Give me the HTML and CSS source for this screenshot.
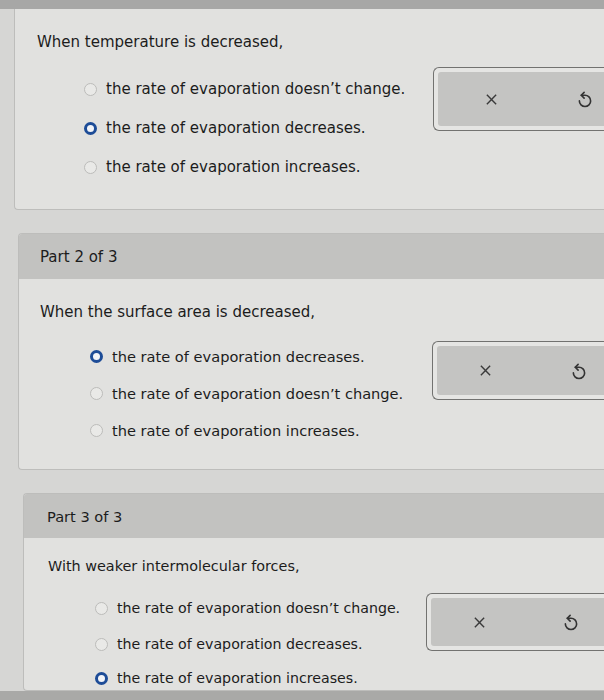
FILE: index.html
```html
<!DOCTYPE html>
<html>
<head>
<meta charset="utf-8">
<link rel="stylesheet" href="styles.css">
</head>
<body>
<div class="topband"></div>

<section class="card card1">
  <div class="body">
    <p class="question">When temperature is decreased,</p>
    <div class="row">
      <ul class="options">
        <li><span class="radio"></span>the rate of evaporation doesn’t change.</li>
        <li><span class="radio on"></span>the rate of evaporation decreases.</li>
        <li><span class="radio"></span>the rate of evaporation increases.</li>
      </ul>
      <div class="answer">
        <div class="answer-inner">
          <svg class="ico-x" viewBox="0 0 14 14"><path d="M2 2L12 12M12 2L2 12"/></svg>
          <svg class="ico-undo" viewBox="0 0 16 16"><path d="M5 5H8A4.5 4.5 0 1 1 3.5 9.5"/><path d="M7.3 2.7L5 5L7.3 7.3"/></svg>
        </div>
      </div>
    </div>
  </div>
</section>

<section class="card card2">
  <div class="head">Part 2 of 3</div>
  <div class="body">
    <p class="question">When the surface area is decreased,</p>
    <div class="row">
      <ul class="options">
        <li><span class="radio on"></span>the rate of evaporation decreases.</li>
        <li><span class="radio"></span>the rate of evaporation doesn’t change.</li>
        <li><span class="radio"></span>the rate of evaporation increases.</li>
      </ul>
      <div class="answer">
        <div class="answer-inner">
          <svg class="ico-x" viewBox="0 0 14 14"><path d="M2 2L12 12M12 2L2 12"/></svg>
          <svg class="ico-undo" viewBox="0 0 16 16"><path d="M5 5H8A4.5 4.5 0 1 1 3.5 9.5"/><path d="M7.3 2.7L5 5L7.3 7.3"/></svg>
        </div>
      </div>
    </div>
  </div>
</section>

<section class="card card3">
  <div class="head">Part 3 of 3</div>
  <div class="body">
    <p class="question">With weaker intermolecular forces,</p>
    <div class="row">
      <ul class="options">
        <li><span class="radio"></span>the rate of evaporation doesn’t change.</li>
        <li><span class="radio"></span>the rate of evaporation decreases.</li>
        <li><span class="radio on"></span>the rate of evaporation increases.</li>
      </ul>
      <div class="answer">
        <div class="answer-inner">
          <svg class="ico-x" viewBox="0 0 14 14"><path d="M2 2L12 12M12 2L2 12"/></svg>
          <svg class="ico-undo" viewBox="0 0 16 16"><path d="M5 5H8A4.5 4.5 0 1 1 3.5 9.5"/><path d="M7.3 2.7L5 5L7.3 7.3"/></svg>
        </div>
      </div>
    </div>
  </div>
</section>
<div class="bottomband"></div>
</body>
</html>
```

FILE: styles.css
```css
html, body {
  margin: 0;
  padding: 0;
}
body {
  width: 604px;
  height: 700px;
  overflow: hidden;
  background: #d6d6d4;
  font-family: "DejaVu Sans", Verdana, sans-serif;
  color: #1c1c1c;
}
.topband {
  height: 9px;
  background: #a7a7a6;
}
.card {
  background: #e1e1df;
  border: 1px solid #bdbdbb;
  border-right: none;
  border-radius: 4px 0 0 4px;
  margin-right: -20px;
  overflow: hidden;
}
.card1 {
  margin-left: 14px;
  border-top: none;
  border-radius: 0 0 0 4px;
  height: 200px;
}
.card2 {
  margin-left: 18px;
  margin-top: 23px;
  height: 235px;
}
.card3 {
  margin-left: 23px;
  margin-top: 23px;
  height: 196px;
}
.head {
  background: #c2c2c0;
  height: 45px;
  display: flex;
  align-items: center;
  padding-left: 21px;
  font-size: 15px;
}
.card3 .head { padding-left: 23px; height: 44px; font-size: 14.6px; }
.question {
  margin: 0;
  font-size: 15px;
  line-height: 18px;
}
.card1 .question { padding: 24px 0 0 22px; }
.card2 .question { padding: 24px 0 0 21px; }
.card3 .question { padding: 19px 0 0 24px; font-size: 14.4px; }
.row {
  display: flex;
  align-items: flex-start;
}
.options {
  list-style: none;
  margin: 0;
  padding: 0;
}
.options li {
  display: flex;
  align-items: center;
  font-size: 15px;
  height: 20px;
}
.card2 .options li { font-size: 14.6px; }
.card3 .options li { font-size: 14.2px; }
.card1 .options { padding: 28px 0 0 69px; }
.card1 .options li + li { margin-top: 19px; }
.card2 .options { padding: 25px 0 0 71px; }
.card2 .options li + li { margin-top: 17px; }
.card3 .options { padding: 23px 0 0 71px; }
.card3 .options li + li { margin-top: 16px; }
.card3 .options li:last-child { margin-top: 14px; }
.radio {
  width: 11px;
  height: 11px;
  border-radius: 50%;
  border: 1px solid #bcbcba;
  background: #e9e9e7;
  margin-right: 9px;
  flex: none;
}
.radio.on {
  width: 7px;
  height: 7px;
  border: 3.5px solid #1d4c97;
  background: #f2f4f8;
}
.answer {
  margin-left: auto;
  border: 1px solid #727270;
  border-right: none;
  border-radius: 6px 0 0 6px;
  padding: 4px 0 4px 4px;
  background: #e5e5e3;
  box-sizing: border-box;
}
.answer-inner {
  background: #c4c4c2;
  border-radius: 3px 0 0 3px;
  display: flex;
  align-items: center;
}
.card1 .answer { margin-top: 16px; width: 191px; }
.card1 .answer-inner { height: 54px; }
.card2 .answer { margin-top: 20px; width: 192px; }
.card2 .answer-inner { height: 49px; }
.card3 .answer { margin-top: 18px; width: 198px; }
.card3 .answer-inner { height: 48px; }
.ico-x {
  width: 13px;
  height: 13px;
  margin-left: 47px;
  fill: none;
  stroke: #3a3a3a;
  stroke-width: 1.5;
}
.card2 .ico-x, .card3 .ico-x { margin-left: 42px; }
.ico-undo {
  width: 20px;
  height: 20px;
  margin-left: 77px;
  fill: none;
  stroke: #333;
  stroke-width: 1.3;
  stroke-linecap: round;
  stroke-linejoin: round;
}
.card3 .ico-undo { margin-left: 75px; }
.bottomband {
  height: 12px;
  background: #a9a9a7;
}
```
